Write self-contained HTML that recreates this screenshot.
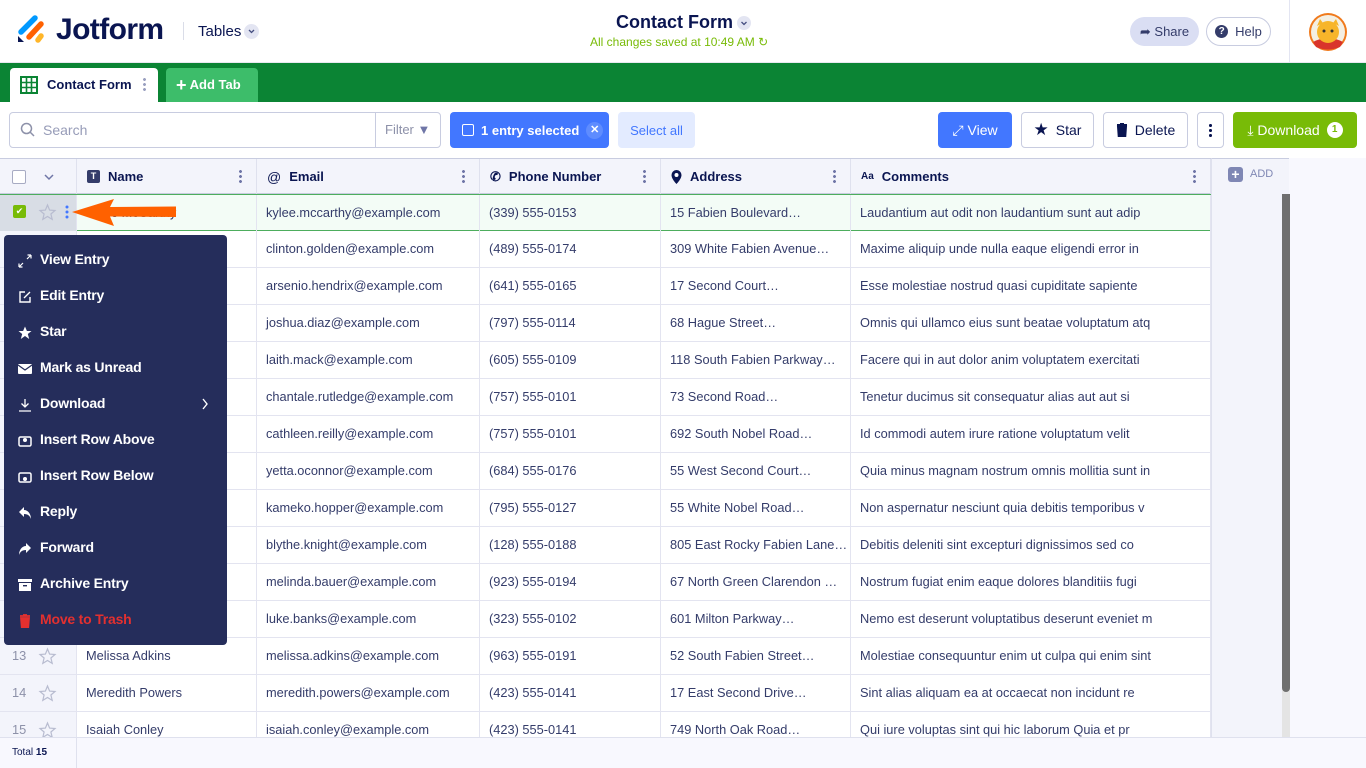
<!DOCTYPE html>
<html><head><meta charset="utf-8"><style>
*{box-sizing:border-box;margin:0;padding:0}
body{width:1366px;height:768px;overflow:hidden;font-family:"Liberation Sans",sans-serif;background:#fff;position:relative;color:#2c3345}
.abs{position:absolute}
.top{height:63px;border-bottom:1px solid #e8e8f0}
.green{top:63px;left:0;width:1366px;height:39px;background:#0b8434}
.btn{position:absolute;border-radius:4px;font-size:14px;display:flex;align-items:center;justify-content:center;gap:7px}
.hdr{top:158px;height:36px;background:#f3f4fb;border-top:1px solid #c8cce0;border-bottom:1px solid #c8cce0;left:0;width:1211px}
.hc{position:absolute;top:0;height:35px;border-right:1px solid #dfe1ee;font-size:13px;font-weight:bold;color:#0a1551;display:flex;align-items:center;padding-left:10px;gap:8px}
.dots{position:absolute;right:14px;top:10px;width:3px;height:14px;background:radial-gradient(circle,#6f76a7 1.3px,transparent 1.6px) 0 0/3px 5px repeat-y}
.row{position:absolute;left:0;width:1211px;height:37px;border-bottom:1px solid #e3e4f0;font-size:12.8px;color:#343c6a}
.row div{position:absolute;top:0;height:36px;line-height:36px;white-space:nowrap;overflow:hidden;border-right:1px solid #e3e4f0;padding-left:9px}
.c0{left:0;width:77px;background:#f3f4fb;color:#8d91a9!important;padding-left:12px!important}
.c1{left:77px;width:180px}.c2{left:257px;width:223px}.c3{left:480px;width:181px}.c4{left:661px;width:190px}.c5{left:851px;width:360px}
.menu{left:4px;top:235px;width:223px;height:410px;background:#252d5b;border-radius:4px}
.mi{position:absolute;left:36px;font-size:14px;font-weight:bold;color:#fff;letter-spacing:-.2px}
.ic{position:absolute;left:14px;width:14px;height:14px}
</style></head><body>
<div class="abs top" style="left:0;top:0;width:1366px"></div>
<svg class="abs" style="left:16px;top:14px" width="28" height="30" viewBox="0 0 28 30">
<path d="M5 18L19 4" stroke="#0099ff" stroke-width="5.5" stroke-linecap="round"/>
<path d="M13 23L25 10" stroke="#ff6100" stroke-width="5.5" stroke-linecap="round"/>
<path d="M22 26L25 22" stroke="#ffb629" stroke-width="5.5" stroke-linecap="round"/>
<path d="M2 28L2 22L8 28Z" fill="#0a1551"/></svg>
<div class="abs" style="left:56px;top:13px;font-size:30px;font-weight:bold;color:#0a1551;letter-spacing:-.6px">Jotform</div>
<div class="abs" style="left:183px;top:22px;width:1px;height:18px;background:#dadde8"></div>
<div class="abs" style="left:198px;top:23px;font-size:15px;color:#0a1551">Tables</div>
<div class="abs" style="left:244px;top:24px;width:15px;height:15px;border-radius:50%;background:#e3e5f2"></div>
<svg class="abs" style="left:247px;top:27px" width="9" height="9"><path d="M2 3L4.5 5.5L7 3" stroke="#454e80" stroke-width="1.3" fill="none"/></svg>
<div class="abs" style="left:616px;top:12px;font-size:18px;font-weight:bold;color:#0a1551">Contact Form</div>
<div class="abs" style="left:737px;top:16px;width:14px;height:14px;border-radius:50%;background:#e3e5f2"></div>
<svg class="abs" style="left:739px;top:18px" width="10" height="10"><path d="M2.5 4L5 6.5L7.5 4" stroke="#454e80" stroke-width="1.3" fill="none"/></svg>
<div class="abs" style="left:590px;top:35px;font-size:12px;color:#78bb07">All changes saved at 10:49 AM ↻</div>
<div class="btn" style="left:1130px;top:17px;width:69px;height:29px;border-radius:15px;background:#dadef3;color:#343c6a;font-size:13px">➦ Share</div>
<div class="btn" style="left:1206px;top:17px;width:65px;height:29px;border-radius:15px;border:1px solid #c8cce0;color:#343c6a;font-size:13px"><span style="width:13px;height:13px;border-radius:50%;background:#343c6a;color:#fff;font-size:10px;font-weight:bold;text-align:center;line-height:13px">?</span>Help</div>
<div class="abs" style="left:1289px;top:0;width:1px;height:63px;background:#e3e5f2"></div>
<svg class="abs" style="left:1308px;top:12px" width="40" height="40"><circle cx="20" cy="20" r="19" fill="#f07a1c"/><circle cx="20" cy="20" r="17" fill="#f4efe2"/><path d="M5 30 Q20 22 35 30 L32 35 Q20 40 8 35Z" fill="#d9342b"/><circle cx="20" cy="20" r="11" fill="#f7b52a"/><path d="M9 14 L12 7 L15 11Z M31 14 L28 7 L25 11Z" fill="#f7b52a"/><circle cx="16" cy="19" r="1.5" fill="#333"/><circle cx="24" cy="19" r="1.5" fill="#333"/></svg>
<div class="abs green"></div>
<div class="abs" style="left:10px;top:68px;width:148px;height:34px;background:#fff;border-radius:4px 4px 0 0"></div>
<svg class="abs" style="left:20px;top:76px" width="18" height="18"><rect x="1" y="1" width="16" height="16" fill="none" stroke="#0b8434" stroke-width="2"/><path d="M1 6.5H17M1 11.5H17M6.5 1V17M11.5 1V17" stroke="#0b8434" stroke-width="1.6"/></svg>
<div class="abs" style="left:47px;top:77px;font-size:13px;font-weight:bold;color:#0a1551">Contact Form</div>
<div class="abs" style="left:143px;top:77px;width:3px;height:15px;background:radial-gradient(circle,#9aa0c0 1.3px,transparent 1.6px) 0 0/3px 5px repeat-y"></div>
<div class="abs" style="left:166px;top:68px;width:92px;height:34px;background:#3dbd6a;border-radius:4px 4px 0 0;color:#fff;font-size:13px;font-weight:bold;line-height:34px;padding-left:10px"><span style="font-size:18px;vertical-align:-2px">+</span> Add Tab</div>
<div class="abs" style="left:9px;top:112px;width:432px;height:36px;border:1px solid #c8cce0;border-radius:4px"></div>
<div class="abs" style="left:375px;top:112px;width:1px;height:36px;background:#c8cce0"></div>
<svg class="abs" style="left:20px;top:122px" width="15" height="15"><circle cx="6.5" cy="6.5" r="5" fill="none" stroke="#8d91a9" stroke-width="1.5"/><path d="M10 10L14 14" stroke="#8d91a9" stroke-width="1.5"/></svg>
<div class="abs" style="left:43px;top:122px;font-size:14px;color:#979cb8">Search</div>
<div class="abs" style="left:385px;top:122px;font-size:13px;color:#8d91a9">Filter <span style="color:#6f76a7">▼</span></div>
<div class="btn" style="left:450px;top:112px;width:159px;height:36px;background:#4277ff;color:#fff;font-size:13px;font-weight:bold;justify-content:flex-start;padding-left:12px"><span style="width:12px;height:12px;border:1.5px solid #fff;border-radius:2px"></span>1 entry selected <span style="width:17px;height:17px;border-radius:50%;background:#5e8cff;font-size:11px;text-align:center;line-height:17px">✕</span></div>
<div class="btn" style="left:618px;top:112px;width:77px;height:36px;background:#e3ebff;color:#4277ff;font-size:13px">Select all</div>
<div class="btn" style="left:938px;top:112px;width:74px;height:36px;background:#4277ff;color:#fff">⤢ View</div>
<div class="btn" style="left:1021px;top:112px;width:73px;height:36px;border:1px solid #c8cce0;color:#0a1551"><span style="font-size:17px">★</span> Star</div>
<div class="btn" style="left:1103px;top:112px;width:85px;height:36px;border:1px solid #c8cce0;color:#0a1551"><svg width="12" height="14"><path d="M1 2H11M4 1H8M2 3.5H10L9.3 13H2.7Z" stroke="#0a1551" stroke-width="2" fill="#0a1551"/></svg> Delete</div>
<div class="btn" style="left:1197px;top:112px;width:27px;height:36px;border:1px solid #c8cce0"><span style="width:3px;height:14px;background:radial-gradient(circle,#0a1551 1.4px,transparent 1.7px) 0 0/3px 5px repeat-y"></span></div>
<div class="btn" style="left:1233px;top:112px;width:124px;height:36px;background:#78bb07;color:#fff">⤓ Download <span style="width:16px;height:16px;border-radius:50%;background:#fff;color:#78bb07;font-size:10px;font-weight:bold;text-align:center;line-height:16px">1</span></div>
<div class="abs" style="left:1211px;top:158px;width:155px;height:610px;background:#f8f8fe"></div>
<div class="abs" style="left:1211px;top:158px;width:78px;height:580px;background:#f3f4fb;border-left:1px solid #dfe1ee;border-top:1px solid #c8cce0"></div>
<div class="abs" style="left:1228px;top:167px;width:15px;height:15px;border-radius:3px;background:#7f87b4;color:#fff;font-size:14px;text-align:center;line-height:15px;font-weight:bold">+</div>
<div class="abs" style="left:1250px;top:168px;font-size:11px;color:#7f87b4">ADD</div>
<div class="abs" style="left:1282px;top:194px;width:8px;height:543px;background:#e4e4e4"></div>
<div class="abs" style="left:1282px;top:194px;width:8px;height:498px;background:#6f6f6f;border-radius:0 0 4px 4px"></div>
<div class="abs hdr">
<div class="hc" style="left:0;width:77px;padding-left:12px"><span style="width:14px;height:14px;border:1px solid #a7abc3;border-radius:2px;background:#fff"></span><svg style="margin-left:10px" width="10" height="8"><path d="M1 2L5 6L9 2" stroke="#6f76a7" stroke-width="1.5" fill="none"/></svg></div>
<div class="hc" style="left:77px;width:180px"><span style="width:13px;height:13px;border-radius:2px;background:#343c6a;color:#fff;font-size:9px;text-align:center;line-height:13px">T</span>Name<i class="dots"></i></div>
<div class="hc" style="left:257px;width:223px"><span style="font-weight:normal;font-size:14px">@</span>Email<i class="dots"></i></div>
<div class="hc" style="left:480px;width:181px"><span>✆</span>Phone Number<i class="dots"></i></div>
<div class="hc" style="left:661px;width:190px"><svg width="11" height="14"><path d="M5.5 0A5 5 0 0 0 .5 5C.5 9 5.5 14 5.5 14S10.5 9 10.5 5A5 5 0 0 0 5.5 0Z" fill="#0a1551"/><circle cx="5.5" cy="5" r="2" fill="#fff"/></svg>Address<i class="dots"></i></div>
<div class="hc" style="left:851px;width:360px"><span style="font-size:10px">Aa</span>Comments<i class="dots"></i></div>
</div>
<div class="row" style="top:194px;background:#f3fcf6;border-top:1px solid #4dad5d;border-bottom:1px solid #4dad5d"><div class="c0" style="background:#d8dde5"><span style="position:absolute;left:13px;top:10px;width:13px;height:13px;background:#78bb07;border-radius:2px;color:#fff;font-size:9px;line-height:13px;text-align:center">✔</span></div><div class="c1" style="background:transparent">Kylee McCarthy</div><div class="c2">kylee.mccarthy@example.com</div><div class="c3">(339) 555-0153</div><div class="c4">15 Fabien Boulevard…</div><div class="c5">Laudantium aut odit non laudantium sunt aut adip</div></div>
<div class="row" style="top:231px"><div class="c0">2</div><div class="c1">Clinton Golden</div><div class="c2">clinton.golden@example.com</div><div class="c3">(489) 555-0174</div><div class="c4">309 White Fabien Avenue…</div><div class="c5">Maxime aliquip unde nulla eaque eligendi error in</div></div>
<div class="row" style="top:268px"><div class="c0">3</div><div class="c1">Arsenio Hendrix</div><div class="c2">arsenio.hendrix@example.com</div><div class="c3">(641) 555-0165</div><div class="c4">17 Second Court…</div><div class="c5">Esse molestiae nostrud quasi cupiditate sapiente</div></div>
<div class="row" style="top:305px"><div class="c0">4</div><div class="c1">Joshua Diaz</div><div class="c2">joshua.diaz@example.com</div><div class="c3">(797) 555-0114</div><div class="c4">68 Hague Street…</div><div class="c5">Omnis qui ullamco eius sunt beatae voluptatum atq</div></div>
<div class="row" style="top:342px"><div class="c0">5</div><div class="c1">Laith Mack</div><div class="c2">laith.mack@example.com</div><div class="c3">(605) 555-0109</div><div class="c4">118 South Fabien Parkway…</div><div class="c5">Facere qui in aut dolor anim voluptatem exercitati</div></div>
<div class="row" style="top:379px"><div class="c0">6</div><div class="c1">Chantale Rutledge</div><div class="c2">chantale.rutledge@example.com</div><div class="c3">(757) 555-0101</div><div class="c4">73 Second Road…</div><div class="c5">Tenetur ducimus sit consequatur alias aut aut si</div></div>
<div class="row" style="top:416px"><div class="c0">7</div><div class="c1">Cathleen Reilly</div><div class="c2">cathleen.reilly@example.com</div><div class="c3">(757) 555-0101</div><div class="c4">692 South Nobel Road…</div><div class="c5">Id commodi autem irure ratione voluptatum velit</div></div>
<div class="row" style="top:453px"><div class="c0">8</div><div class="c1">Yetta Oconnor</div><div class="c2">yetta.oconnor@example.com</div><div class="c3">(684) 555-0176</div><div class="c4">55 West Second Court…</div><div class="c5">Quia minus magnam nostrum omnis mollitia sunt in</div></div>
<div class="row" style="top:490px"><div class="c0">9</div><div class="c1">Kameko Hopper</div><div class="c2">kameko.hopper@example.com</div><div class="c3">(795) 555-0127</div><div class="c4">55 White Nobel Road…</div><div class="c5">Non aspernatur nesciunt quia debitis temporibus v</div></div>
<div class="row" style="top:527px"><div class="c0">10</div><div class="c1">Blythe Knight</div><div class="c2">blythe.knight@example.com</div><div class="c3">(128) 555-0188</div><div class="c4">805 East Rocky Fabien Lane…</div><div class="c5">Debitis deleniti sint excepturi dignissimos sed co</div></div>
<div class="row" style="top:564px"><div class="c0">11</div><div class="c1">Melinda Bauer</div><div class="c2">melinda.bauer@example.com</div><div class="c3">(923) 555-0194</div><div class="c4">67 North Green Clarendon …</div><div class="c5">Nostrum fugiat enim eaque dolores blanditiis fugi</div></div>
<div class="row" style="top:601px"><div class="c0">12</div><div class="c1">Luke Banks</div><div class="c2">luke.banks@example.com</div><div class="c3">(323) 555-0102</div><div class="c4">601 Milton Parkway…</div><div class="c5">Nemo est deserunt voluptatibus deserunt eveniet m</div></div>
<div class="row" style="top:638px"><div class="c0">13</div><div class="c1">Melissa Adkins</div><div class="c2">melissa.adkins@example.com</div><div class="c3">(963) 555-0191</div><div class="c4">52 South Fabien Street…</div><div class="c5">Molestiae consequuntur enim ut culpa qui enim sint</div></div>
<div class="row" style="top:675px"><div class="c0">14</div><div class="c1">Meredith Powers</div><div class="c2">meredith.powers@example.com</div><div class="c3">(423) 555-0141</div><div class="c4">17 East Second Drive…</div><div class="c5">Sint alias aliquam ea at occaecat non incidunt re</div></div>
<div class="row" style="top:712px"><div class="c0">15</div><div class="c1">Isaiah Conley</div><div class="c2">isaiah.conley@example.com</div><div class="c3">(423) 555-0141</div><div class="c4">749 North Oak Road…</div><div class="c5">Qui iure voluptas sint qui hic laborum Quia et pr</div></div>
<svg class="abs" style="left:0;top:194px" width="77" height="555">
<defs><path id="s" d="M8.5 1L10.6 6.1L16 6.5L11.9 10L13.2 15.4L8.5 12.5L3.8 15.4L5.1 10L1 6.5L6.4 6.1Z" fill="none" stroke="#b8bcd0" stroke-width="1.2"/></defs>
<use href="#s" x="39" y="10"/><use href="#s" x="39" y="454"/><use href="#s" x="39" y="491"/><use href="#s" x="39" y="528"/>
<circle cx="67" cy="13" r="1.5" fill="#4277ff"/><circle cx="67" cy="18" r="1.5" fill="#4277ff"/><circle cx="67" cy="23" r="1.5" fill="#4277ff"/>
</svg>
<div class="abs" style="left:0;top:737px;width:1366px;height:31px;background:#f8f8fe;border-top:1px solid #dfe1ee"></div>
<div class="abs" style="left:76px;top:737px;width:1px;height:31px;background:#dfe1ee"></div>
<div class="abs" style="left:12px;top:747px;font-size:10px;color:#0a1551">Total <b>15</b></div>
<svg class="abs" style="left:70px;top:198px" width="110" height="30"><path d="M2 14L44 1L40 9L106 8.5L106 19L40 18.5L44 28Z" fill="#ff6100"/></svg>
<div class="abs menu">
<svg class="ic" style="top:19px" viewBox="0 0 14 14"><path d="M1 13L5 9M1 13V9.5M1 13H4.5M13 1L9 5M13 1V4.5M13 1H9.5" stroke="#fff" stroke-width="1.2" fill="none"/></svg><div class="mi" style="top:16px">View Entry</div>
<svg class="ic" style="top:55px" viewBox="0 0 14 14"><path d="M7 2H2V12H12V7M6 8L12 2" stroke="#fff" stroke-width="1.4" fill="none"/></svg><div class="mi" style="top:52px">Edit Entry</div>
<svg class="ic" style="top:91px" viewBox="0 0 14 14"><path d="M7 .5L8.9 5H13.5L9.8 8L11.2 13L7 10L2.8 13L4.2 8L.5 5H5.1Z" fill="#fff"/></svg><div class="mi" style="top:88px">Star</div>
<svg class="ic" style="top:127px" viewBox="0 0 14 14"><rect x="0" y="2" width="14" height="10" rx="1" fill="#fff"/><path d="M0 3L7 8L14 3" stroke="#252d5b" stroke-width="1.3" fill="none"/></svg><div class="mi" style="top:124px">Mark as Unread</div>
<svg class="ic" style="top:163px" viewBox="0 0 14 14"><path d="M7 1V9M3.5 5.5L7 9L10.5 5.5M1 13H13" stroke="#fff" stroke-width="1.3" fill="none"/></svg><div class="mi" style="top:160px">Download</div><svg class="abs" style="left:197px;top:163px" width="8" height="12"><path d="M2 1L6 6L2 11" stroke="#fff" stroke-width="1.4" fill="none"/></svg>
<svg class="ic" style="top:199px" viewBox="0 0 14 14"><rect x="1" y="3" width="12" height="9" rx="1.5" stroke="#fff" stroke-width="1.5" fill="none"/><circle cx="7" cy="6" r="2" fill="#fff"/></svg><div class="mi" style="top:196px">Insert Row Above</div>
<svg class="ic" style="top:235px" viewBox="0 0 14 14"><rect x="1" y="3" width="12" height="9" rx="1.5" stroke="#fff" stroke-width="1.5" fill="none"/><circle cx="7" cy="9" r="2" fill="#fff"/></svg><div class="mi" style="top:232px">Insert Row Below</div>
<svg class="ic" style="top:271px" viewBox="0 0 14 14"><path d="M6 1L1 6L6 11V8C10 8 12 10 13 13C13 8 10 4 6 4Z" fill="#fff"/></svg><div class="mi" style="top:268px">Reply</div>
<svg class="ic" style="top:307px" viewBox="0 0 14 14"><path d="M8 1L13 6L8 11V8C4 8 2 10 1 13C1 8 4 4 8 4Z" fill="#fff"/></svg><div class="mi" style="top:304px">Forward</div>
<svg class="ic" style="top:343px" viewBox="0 0 14 14"><rect x="0" y="1" width="14" height="3" fill="#fff"/><path d="M1 5H13V13H1Z" fill="#fff"/><rect x="5" y="7" width="4" height="1.4" fill="#252d5b"/></svg><div class="mi" style="top:340px">Archive Entry</div>
<svg class="ic" style="top:379px" viewBox="0 0 14 14"><path d="M2 2H12M5 1H9M3 4H11L10.2 13.5H3.8Z" stroke="#e3302f" stroke-width="1.8" fill="#e3302f"/></svg><div class="mi" style="top:376px;color:#e3302f">Move to Trash</div>
</div>
</body></html>
